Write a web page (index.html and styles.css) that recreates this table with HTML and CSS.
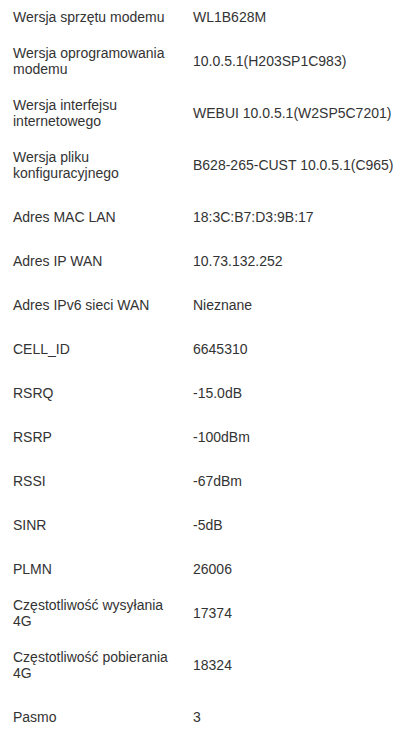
FILE: index.html
```html
<!DOCTYPE html>
<html lang="pl">
<head>
<meta charset="utf-8">
<title>Informacje o urządzeniu</title>
<link rel="stylesheet" href="styles.css">
</head>
<body>
<div class="info">
  <div class="row"><div class="label">Wersja sprzętu modemu</div><div class="value">WL1B628M</div></div>
  <div class="row tall"><div class="label">Wersja oprogramowania modemu</div><div class="value">10.0.5.1(H203SP1C983)</div></div>
  <div class="row tall"><div class="label">Wersja interfejsu internetowego</div><div class="value">WEBUI 10.0.5.1(W2SP5C7201)</div></div>
  <div class="row tall"><div class="label">Wersja pliku konfiguracyjnego</div><div class="value">B628-265-CUST 10.0.5.1(C965)</div></div>
  <div class="row"><div class="label">Adres MAC LAN</div><div class="value">18:3C:B7:D3:9B:17</div></div>
  <div class="row"><div class="label">Adres IP WAN</div><div class="value">10.73.132.252</div></div>
  <div class="row"><div class="label">Adres IPv6 sieci WAN</div><div class="value">Nieznane</div></div>
  <div class="row"><div class="label">CELL_ID</div><div class="value">6645310</div></div>
  <div class="row"><div class="label">RSRQ</div><div class="value">-15.0dB</div></div>
  <div class="row"><div class="label">RSRP</div><div class="value">-100dBm</div></div>
  <div class="row"><div class="label">RSSI</div><div class="value">-67dBm</div></div>
  <div class="row"><div class="label">SINR</div><div class="value">-5dB</div></div>
  <div class="row"><div class="label">PLMN</div><div class="value">26006</div></div>
  <div class="row tall"><div class="label">Częstotliwość wysyłania 4G</div><div class="value">17374</div></div>
  <div class="row tall"><div class="label">Częstotliwość pobierania 4G</div><div class="value">18324</div></div>
  <div class="row"><div class="label">Pasmo</div><div class="value">3</div></div>
</div>
</body>
</html>
```
FILE: styles.css
```css
html, body {
  margin: 0;
  padding: 0;
  background: #fff;
}

body {
  font-family: "Liberation Sans", Arial, sans-serif;
  font-size: 14px;
  line-height: 16px;
  color: #333;
  overflow: hidden;
}

.info {
  margin-top: -5px;
  padding-left: 13px;
}

.row {
  display: flex;
  align-items: center;
  min-height: 44px;
  box-sizing: border-box;
}

.row.tall {
  padding: 6px 0 14px;
}

.label {
  flex: 0 0 180px;
  box-sizing: border-box;
  padding-right: 14px;
}

.value {
  flex: 1 1 auto;
  white-space: nowrap;
}
```
